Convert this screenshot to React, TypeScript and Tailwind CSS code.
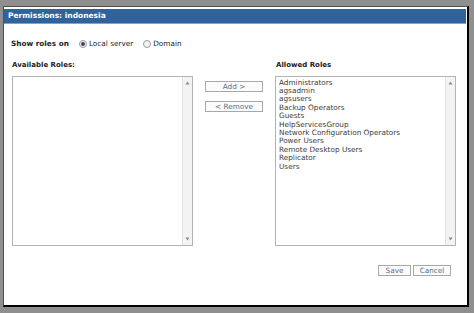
import React from 'react';

const allowed = [
  'Administrators',
  'agsadmin',
  'agsusers',
  'Backup Operators',
  'Guests',
  'HelpServicesGroup',
  'Network Configuration Operators',
  'Power Users',
  'Remote Desktop Users',
  'Replicator',
  'Users',
];

function Scrollbar() {
  return (
    <div className="flex w-[10px] flex-col justify-between border-l border-[#e2e2e2] bg-[#f3f3f3]">
      <svg className="mt-[4px] ml-[2px] h-[4px] w-[5px]" viewBox="0 0 5 4">
        <path d="M2.5 0.5L4.5 3.5H0.5z" fill="#8a8a8a" />
      </svg>
      <svg className="mb-[4px] ml-[2px] h-[4px] w-[5px]" viewBox="0 0 5 4">
        <path d="M0.5 0.5H4.5L2.5 3.5z" fill="#8a8a8a" />
      </svg>
    </div>
  );
}

function ListBox({ items }: { items: string[] }) {
  return (
    <div className="flex h-[170px] w-[181px] border border-[#b4b4b4] bg-white">
      <div className="flex-1 pt-[1.5px] pl-[3px]">
        {items.map((item) => (
          <div key={item} className="text-[7.3px] leading-[8.4px] text-[#3c3c3c]">
            {item}
          </div>
        ))}
      </div>
      <Scrollbar />
    </div>
  );
}

function Radio({ checked }: { checked?: boolean }) {
  return (
    <span className="flex h-[8px] w-[8px] items-center justify-center rounded-full border border-[#9a9a9a] bg-[#f4f4f4]">
      {checked && <span className="h-[4px] w-[4px] rounded-full bg-[#3a4a5e]" />}
    </span>
  );
}

function Button({ label, w }: { label: string; w: string }) {
  return (
    <div
      className={`flex h-[11px] ${w} items-center justify-center border border-[#a8a8a8] bg-[#fbfbfb] text-[7.3px] leading-none text-[#5a6f8f]`}
    >
      {label}
    </div>
  );
}

export default function App() {
  return (
    <div
      className="h-[313px] w-[474px] overflow-hidden bg-[#8f8f8f] pt-[6px] pl-[3px]"
      style={{ fontFamily: '"DejaVu Sans", Verdana, sans-serif' }}
    >
      <div className="h-[301px] w-[466px] border-t border-l border-r-2 border-b-2 border-t-[#505050] border-l-[#505050] border-r-black border-b-black bg-white pt-[2px] pr-[1px]">
        <div className="flex h-[15px] items-center border-b border-[#7fa3c9] bg-[#2f639b] pl-[4px]">
          <span className="text-[7.5px] font-bold text-white">Permissions: indonesia</span>
        </div>

        <div className="mt-[15px] flex h-[10px] items-center pl-[7px] text-[7.3px] text-[#222]">
          <span className="font-bold">Show roles on</span>
          <span className="ml-[10px]">
            <Radio checked />
          </span>
          <span className="ml-[2px]">Local server</span>
          <span className="ml-[10px]">
            <Radio />
          </span>
          <span className="ml-[2px]">Domain</span>
        </div>

        <div className="mt-[11px] flex h-[10px] items-center text-[7px] font-bold text-[#222]">
          <span className="ml-[8px] w-[264px]">Available Roles:</span>
          <span>Allowed Roles</span>
        </div>

        <div className="mt-[6px] flex pl-[8px]">
          <ListBox items={[]} />
          <div className="ml-[12px] flex flex-col gap-[9px] pt-[5px]">
            <Button label="Add >" w="w-[58px]" />
            <Button label="< Remove" w="w-[58px]" />
          </div>
          <div className="ml-[12px]">
            <ListBox items={allowed} />
          </div>
        </div>

        <div className="mt-[19px] flex gap-[2px] pl-[374px]">
          <Button label="Save" w="w-[33px]" />
          <Button label="Cancel" w="w-[38px]" />
        </div>
      </div>
    </div>
  );
}
